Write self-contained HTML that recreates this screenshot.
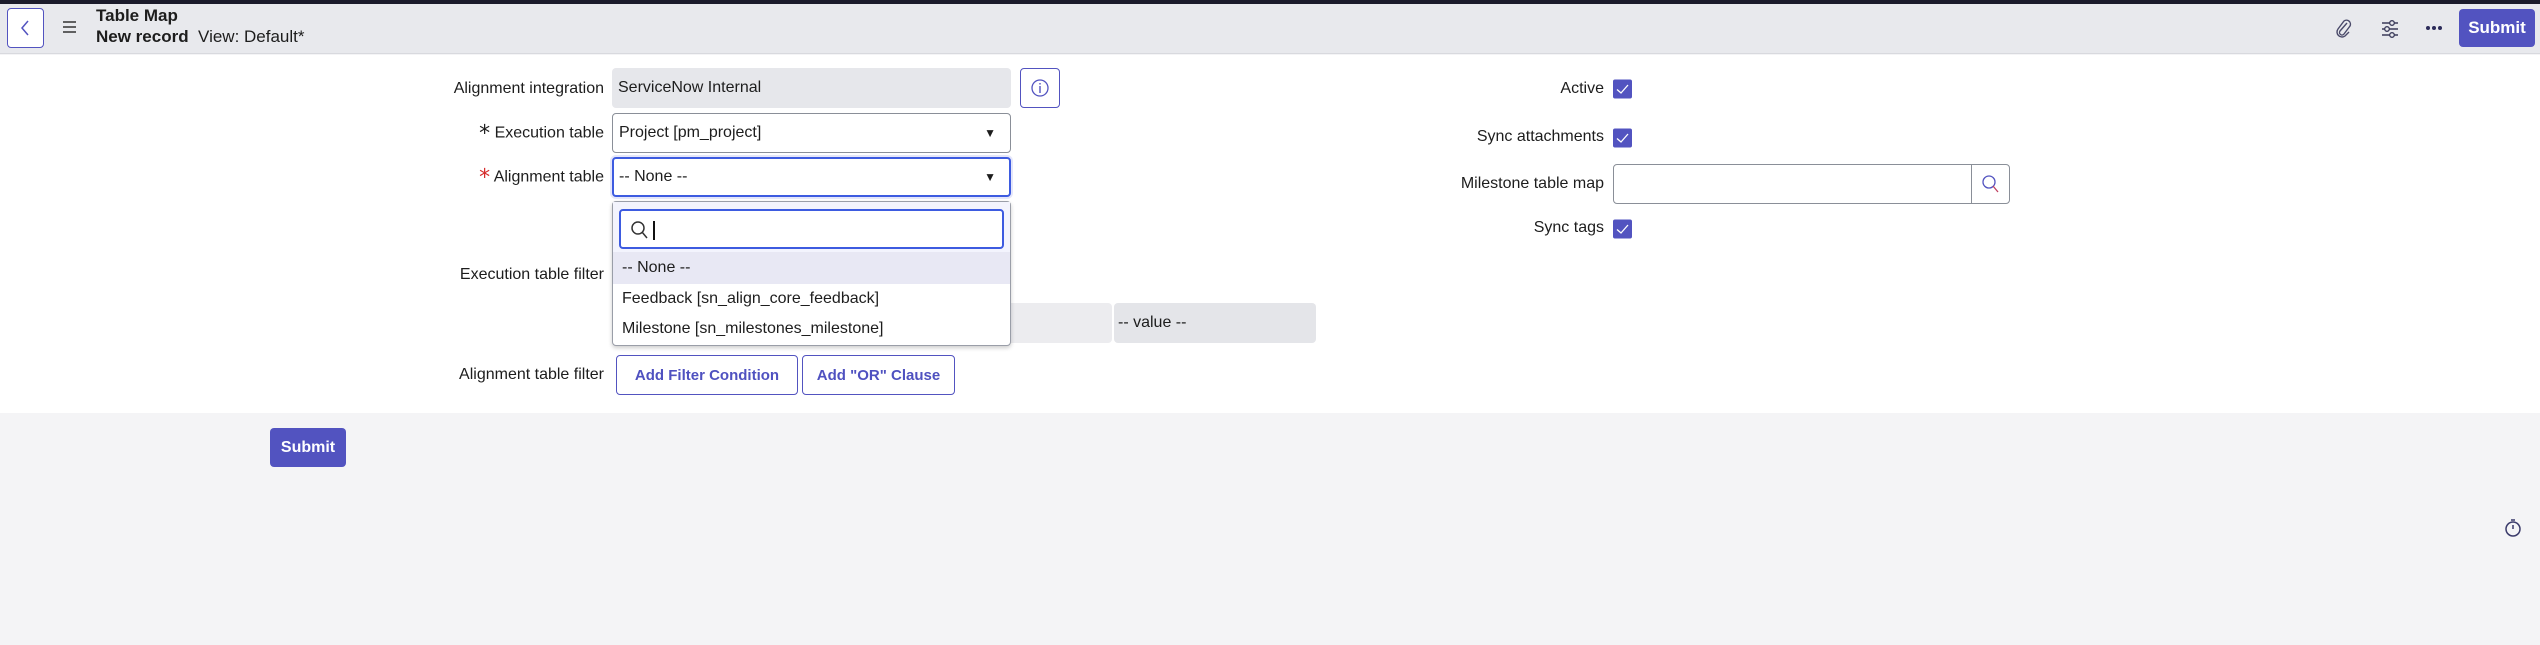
<!DOCTYPE html>
<html><head><meta charset="utf-8"><style>
*{box-sizing:border-box;margin:0;padding:0}
body{width:2540px;height:645px;position:relative;background:#f4f4f6;font-family:"Liberation Sans",sans-serif;color:#1d1d1d;overflow:hidden;font-size:16px}
.a{position:absolute}
.f{display:flex;align-items:center}
.l{position:absolute;right:1936px;white-space:nowrap;font-size:16px;transform:translateY(-50%)}
.r{position:absolute;right:936px;white-space:nowrap;font-size:16px;transform:translateY(-50%)}
.cb{position:absolute;left:1613px;width:19px;height:19px;background:#5253c0;border-radius:2px;transform:translateY(-50%)}
.cb svg{position:absolute;left:3px;top:4px}
.btn{position:absolute;border:1.5px solid #5253c0;border-radius:4px;color:#4f51c0;font-weight:bold;font-size:15px;display:flex;align-items:center;justify-content:center;background:#fff}
.ast{font-size:22px;font-weight:normal;vertical-align:-3px;font-family:"DejaVu Sans",sans-serif}
</style></head><body>
<div class="a" style="left:0;top:0;width:2540px;height:4px;background:#1b1b2b"></div>
<div class="a" style="left:0;top:4px;width:2540px;height:50px;background:#e8e9ed;border-bottom:1px solid #d8d9de"></div>
<div class="a" style="left:7px;top:8px;width:37px;height:40px;border:1.5px solid #5253c0;border-radius:4px;background:#fff"><svg width="37" height="40" style="position:absolute;left:-1px;top:-1px"><path d="M21 13 L15 20 L21 27" stroke="#5253c0" stroke-width="1.5" fill="none"/></svg></div>
<svg class="a" style="left:62px;top:20px" width="16" height="14"><path d="M1 2H14M1 7H14M1 12H14" stroke="#333" stroke-width="1.4"/></svg>
<div class="a" style="left:96px;top:6px;font-weight:bold;font-size:17px">Table Map</div>
<div class="a" style="left:96px;top:27px;font-size:17px"><b>New record</b>&nbsp; View: Default*</div>
<svg class="a" style="left:2334px;top:18px" width="20" height="22"><path d="M13 5 L6 13 a2.5 2.5 0 0 0 4 3 L16 8 a4 4 0 0 0 -6 -5 L4 11 a5 5 0 0 0 7 7 L15 14" stroke="#4a4a6a" stroke-width="1.4" fill="none"/></svg>
<svg class="a" style="left:2380px;top:18px" width="20" height="22"><path d="M2 5H18M2 11H18M2 17H18" stroke="#3a3a5a" stroke-width="1.4"/><circle cx="12" cy="5" r="2.3" fill="#e8e9ed" stroke="#3a3a5a" stroke-width="1.3"/><circle cx="7" cy="11" r="2.3" fill="#e8e9ed" stroke="#3a3a5a" stroke-width="1.3"/><circle cx="12" cy="17" r="2.3" fill="#e8e9ed" stroke="#3a3a5a" stroke-width="1.3"/></svg>
<svg class="a" style="left:2425px;top:25px" width="20" height="6"><circle cx="3" cy="3" r="2" fill="#2c2c5a"/><circle cx="9" cy="3" r="2" fill="#2c2c5a"/><circle cx="15" cy="3" r="2" fill="#2c2c5a"/></svg>
<div class="a" style="left:2459px;top:9px;width:76px;height:38px;background:#5253c0;border-radius:4px;color:#fff;font-weight:bold;font-size:17px;display:flex;align-items:center;justify-content:center">Submit</div>
<div class="a" style="left:0;top:55px;width:2540px;height:358px;background:#fff"></div>
<div class="l" style="top:89px">Alignment integration</div>
<div class="a f" style="left:612px;top:68px;width:399px;height:40px;background:#e6e7eb;border-radius:4px;padding:0 6px;font-size:16px">ServiceNow Internal</div>
<div class="a" style="left:1020px;top:68px;width:40px;height:40px;border:1.5px solid #5253c0;border-radius:4px"><svg width="40" height="40" style="position:absolute;left:-1px;top:-1px"><circle cx="20" cy="20" r="8" stroke="#5253c0" stroke-width="1.3" fill="none"/><path d="M20 18V25M20 15V16.5" stroke="#5253c0" stroke-width="1.4"/></svg></div>
<div class="l" style="top:134px"><span class="ast">*</span> Execution table</div>
<div class="a f" style="left:612px;top:113px;width:399px;height:40px;border:1px solid #8a8f98;border-radius:4px;padding:0 6px;font-size:16px">Project [pm_project]<span style="position:absolute;right:14px;top:12px;font-size:12px">▼</span></div>
<div class="l" style="top:178px"><span class="ast" style="color:#d52b2b">*</span> Alignment table</div>
<div class="a" style="left:610px;top:155px;width:403px;height:44px;background:#e4e6fa;border-radius:6px"></div>
<div class="a f" style="left:612px;top:157px;width:399px;height:40px;border:2px solid #3d5be0;border-radius:4px;padding:0 5px;font-size:16px;background:#fff">-- None --<span style="position:absolute;right:13px;top:11px;font-size:12px">▼</span></div>
<div class="l" style="top:275px">Execution table filter</div>
<div class="a" style="left:612px;top:303px;width:500px;height:40px;background:#ececef;border-radius:4px"></div>
<div class="a f" style="left:1114px;top:303px;width:202px;height:40px;background:#e4e5e9;border-radius:4px;padding:0 4px;font-size:16px">-- value --</div>
<div class="a" style="left:612px;top:201px;width:399px;height:145px;background:#fff;border:1px solid #9a9ea8;border-radius:4px;box-shadow:0 2px 4px rgba(0,0,0,.2)">
<div class="a" style="left:0;top:0;width:397px;height:50px;background:#f3f4fd"></div>
<div class="a" style="left:6px;top:7px;width:385px;height:40px;border:2px solid #3d5be0;border-radius:4px;background:#fff"><svg width="30" height="30" style="position:absolute;left:6px;top:5px"><circle cx="11" cy="12" r="6" stroke="#333" stroke-width="1.5" fill="none"/><path d="M15 16L20 22" stroke="#333" stroke-width="1.5"/><path d="M27 5V24" stroke="#111" stroke-width="2"/></svg></div>
<div class="a f" style="left:0;top:50px;width:397px;height:32px;background:#e8e8f4;padding:0 9px;font-size:16px">-- None --</div>
<div class="a" style="left:9px;top:88px;font-size:16px">Feedback [sn_align_core_feedback]</div>
<div class="a" style="left:9px;top:118px;font-size:16px">Milestone [sn_milestones_milestone]</div>
</div>
<div class="l" style="top:375px">Alignment table filter</div>
<div class="btn" style="left:616px;top:355px;width:182px;height:40px">Add Filter Condition</div>
<div class="btn" style="left:802px;top:355px;width:153px;height:40px">Add "OR" Clause</div>
<div class="r" style="top:89px">Active</div>
<div class="cb" style="top:89px"><svg width="13" height="11"><path d="M1 6L5 9.5L12 1.5" stroke="#fff" stroke-width="1.3" fill="none"/></svg></div>
<div class="r" style="top:137px">Sync attachments</div>
<div class="cb" style="top:138px"><svg width="13" height="11"><path d="M1 6L5 9.5L12 1.5" stroke="#fff" stroke-width="1.3" fill="none"/></svg></div>
<div class="r" style="top:184px">Milestone table map</div>
<div class="a" style="left:1613px;top:164px;width:397px;height:40px;border:1px solid #8a8f98;border-radius:4px"><div class="a" style="left:357px;top:0;width:1px;height:38px;background:#8a8f98"></div><svg width="30" height="30" style="position:absolute;left:362px;top:5px"><circle cx="13" cy="12" r="6" stroke="#5253c0" stroke-width="1.3" fill="none"/><path d="M17 16L22 22" stroke="#c04060" stroke-width="1.3"/></svg></div>
<div class="r" style="top:228px">Sync tags</div>
<div class="cb" style="top:229px"><svg width="13" height="11"><path d="M1 6L5 9.5L12 1.5" stroke="#fff" stroke-width="1.3" fill="none"/></svg></div>
<div class="a" style="left:270px;top:428px;width:76px;height:39px;background:#5253c0;border-radius:4px;color:#fff;font-weight:bold;font-size:16px;display:flex;align-items:center;justify-content:center">Submit</div>
<svg class="a" style="left:2503px;top:518px" width="20" height="20"><circle cx="10" cy="11" r="7" stroke="#3a3a6a" stroke-width="1.5" fill="none"/><path d="M10 11V7M8 2H12" stroke="#3a3a6a" stroke-width="1.5"/></svg>
</body></html>
